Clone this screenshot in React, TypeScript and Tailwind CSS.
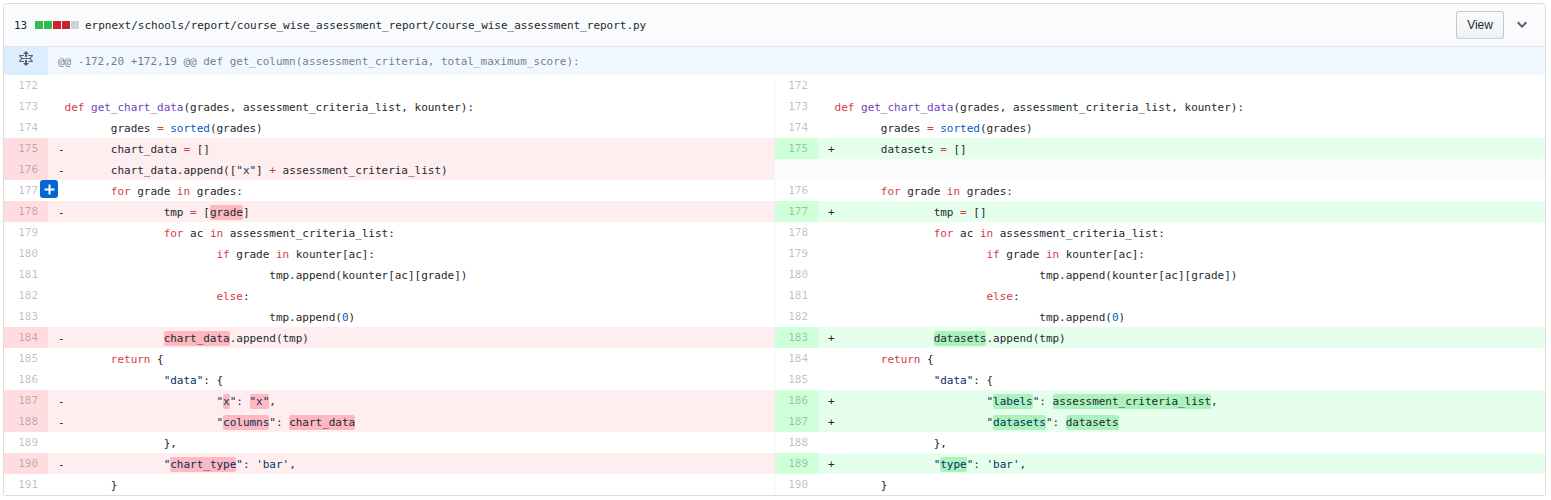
import React from "react";

type Tok = string | { c: string; t: string };
type Kind = "ctx" | "del" | "add" | "blank";
type Side = { n?: number; kind: Kind; code?: Tok[] };

const kw = (t: string): Tok => ({ c: "text-[#d73a49]", t });
const fn = (t: string): Tok => ({ c: "text-[#6f42c1]", t });
const bi = (t: string): Tok => ({ c: "text-[#005cc5]", t });
const str = (t: string): Tok => ({ c: "text-[#032f62]", t });
const del = (t: string): Tok => ({ c: "bg-[#fdb8c0] rounded-[2px] py-px", t });
const delStr = (t: string): Tok => ({ c: "bg-[#fdb8c0] rounded-[2px] py-px text-[#032f62]", t });
const ins = (t: string): Tok => ({ c: "bg-[#acf2bd] rounded-[2px] py-px", t });
const insStr = (t: string): Tok => ({ c: "bg-[#acf2bd] rounded-[2px] py-px text-[#032f62]", t });

const ctx = (n: number, code: Tok[]): Side => ({ n, kind: "ctx", code: [" ", ...code] });
const rem = (n: number, code: Tok[]): Side => ({ n, kind: "del", code: ["-", ...code] });
const add = (n: number, code: Tok[]): Side => ({ n, kind: "add", code: ["+", ...code] });
const both = (a: number, b: number, code: Tok[]): [Side, Side] => [ctx(a, code), ctx(b, code)];

const rows: [Side, Side][] = [
  both(172, 172, []),
  both(173, 173, [kw("def"), " ", fn("get_chart_data"), "(grades, assessment_criteria_list, kounter):"]),
  both(174, 174, ["\tgrades ", kw("="), " ", bi("sorted"), "(grades)"]),
  [rem(175, ["\tchart_data ", kw("="), " []"]), add(175, ["\tdatasets ", kw("="), " []"])],
  [rem(176, ["\tchart_data.append([", str('"x"'), "] ", kw("+"), " assessment_criteria_list)"]), { kind: "blank" }],
  both(177, 176, ["\t", kw("for"), " grade ", kw("in"), " grades:"]),
  [rem(178, ["\t\ttmp ", kw("="), " [", del("grade"), "]"]), add(177, ["\t\ttmp ", kw("="), " []"])],
  both(179, 178, ["\t\t", kw("for"), " ac ", kw("in"), " assessment_criteria_list:"]),
  both(180, 179, ["\t\t\t", kw("if"), " grade ", kw("in"), " kounter[ac]:"]),
  both(181, 180, ["\t\t\t\ttmp.append(kounter[ac][grade])"]),
  both(182, 181, ["\t\t\t", kw("else"), ":"]),
  both(183, 182, ["\t\t\t\ttmp.append(", bi("0"), ")"]),
  [rem(184, ["\t\t", del("chart_data"), ".append(tmp)"]), add(183, ["\t\t", ins("datasets"), ".append(tmp)"])],
  both(185, 184, ["\t", kw("return"), " {"]),
  both(186, 185, ["\t\t", str('"data"'), ": {"]),
  [
    rem(187, ["\t\t\t", str('"'), delStr("x"), str('"'), ": ", delStr('"x"'), ","]),
    add(186, ["\t\t\t", str('"'), insStr("labels"), str('"'), ": ", ins("assessment_criteria_list"), ","]),
  ],
  [
    rem(188, ["\t\t\t", str('"'), delStr("columns"), str('"'), ": ", del("chart_data")]),
    add(187, ["\t\t\t", str('"'), insStr("datasets"), str('"'), ": ", ins("datasets")]),
  ],
  both(189, 188, ["\t\t},"]),
  [
    rem(190, ["\t\t", str('"'), delStr("chart_type"), str('"'), ": ", str("'bar'"), ","]),
    add(189, ["\t\t", str('"'), insStr("type"), str('"'), ": ", str("'bar'"), ","]),
  ],
  both(191, 190, ["\t}"]),
];

const numBg: Record<Kind, string> = {
  ctx: "bg-white",
  del: "bg-[#ffdce0]",
  add: "bg-[#cdffd8]",
  blank: "bg-[#fafbfc]",
};
const codeBg: Record<Kind, string> = {
  ctx: "bg-white",
  del: "bg-[#ffeef0]",
  add: "bg-[#e6ffed]",
  blank: "bg-[#fafbfc]",
};

function PlusButton() {
  return (
    <span className="absolute left-[36px] top-0 flex h-[18px] w-[18px] items-center justify-center rounded-[3px] bg-[#0366d6]">
      <svg width="11" height="11" viewBox="0 0 11 11" fill="#fff">
        <path d="M4.5 0.5h2v4h4v2h-4v4h-2v-4h-4v-2h4z" />
      </svg>
    </span>
  );
}

function Cells({ side, right }: { side: Side; right?: boolean }) {
  return (
    <>
      <div
        className={`relative h-[21px] pr-[10px] text-right leading-[21px] text-[#1b1f234d] ${numBg[side.kind]} ${
          right && side.kind === "ctx" ? "border-l border-[#f6f8fa]" : ""
        }`}
      >
        {side.n}
        {!right && side.n === 177 && <PlusButton />}
      </div>
      <div
        className={`h-[21px] overflow-hidden whitespace-pre pl-[10px] leading-[23px] text-[#24292e] [tab-size:8] ${codeBg[side.kind]}`}
      >
        {side.code?.map((tok, i) =>
          typeof tok === "string" ? (
            <React.Fragment key={i}>{tok}</React.Fragment>
          ) : (
            <span key={i} className={tok.c}>
              {tok.t}
            </span>
          )
        )}
      </div>
    </>
  );
}

export default function App() {
  return (
    <div className="h-[500px] bg-white p-[3px] font-['DejaVu_Sans_Mono','Liberation_Mono',monospace] text-[11px] tracking-[-0.02px]">
      <div className="w-[1543px] rounded-[3px] border border-[#dddddd]">
        <div className="flex h-[43px] items-center border-b border-[#e1e4e8] bg-[#fafbfc] pl-[10px] pr-[17px] text-[#24292e]">
          <span className="w-[21px] pt-[2px]">13</span>
          <span className="flex gap-px">
            <span className="h-2 w-2 bg-[#2cbe4e]" />
            <span className="h-2 w-2 bg-[#2cbe4e]" />
            <span className="h-2 w-2 bg-[#cb2431]" />
            <span className="h-2 w-2 bg-[#cb2431]" />
            <span className="h-2 w-2 bg-[#d1d5da]" />
          </span>
          <span className="ml-[6px] pt-[2px]">erpnext/schools/report/course_wise_assessment_report/course_wise_assessment_report.py</span>
          <div className="ml-auto flex items-center gap-[12px]">
            <button className="h-[28px] w-[48px] rounded-[3px] border border-[#1b1f2333] bg-linear-to-b from-[#fafbfc] to-[#eff3f6] font-['Liberation_Sans',sans-serif] text-[12px] text-[#24292e]">
              View
            </button>
            <svg width="12" height="16" viewBox="0 0 10 16" fill="#586069">
              <path d="M5 11L0 6l1.5-1.5L5 8.25 8.5 4.5 10 6l-5 5z" />
            </svg>
          </div>
        </div>
        <div className="flex h-[28px] bg-[#f1f8ff]">
          <div className="flex w-[44px] justify-center bg-[#dbedff] pt-[4px]">
            <svg width="14" height="16" viewBox="0 0 14 16" fill="#586069">
              <path d="M11.5 7.5L14 10c0 .55-.45 1-1 1H9v-1h3.5l-2-2h-7l-2 2H5v1H1c-.55 0-1-.45-1-1l2.5-2.5L0 5c0-.55.45-1 1-1h4v1H1.5l2 2h7l2-2H9V4h4c.55 0 1 .45 1 1l-2.5 2.5zM6 6h2V3h2L7 0 4 3h2v3zm2 3H6v3H4l3 3 3-3H8V9z" />
            </svg>
          </div>
          <div className="pl-[10px] pt-px leading-[28px] text-[#1b1f2399]">
            @@ -172,20 +172,19 @@ def get_column(assessment_criteria, total_maximum_score):
          </div>
        </div>
        {rows.map(([l, r], i) => (
          <div key={i} className="grid h-[21px] grid-cols-[44px_727px_43px_727px]">
            <Cells side={l} />
            <Cells side={r} right />
          </div>
        ))}
      </div>
    </div>
  );
}
